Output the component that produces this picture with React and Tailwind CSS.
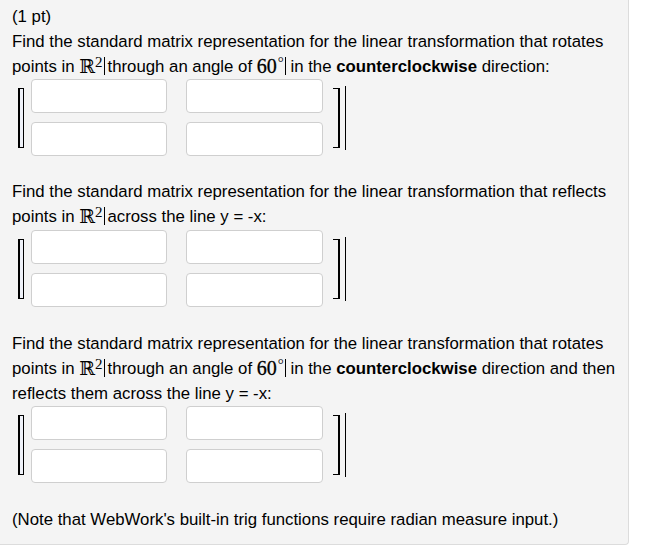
import React from 'react';

const sans = { fontFamily: '"Liberation Sans", Arial, sans-serif' };

function R2() {
  return (
    <span className="inline-flex items-start">
      <span className="font-['DejaVu_Serif',serif] text-[19px] leading-[25px]">ℝ</span>
      <span className="font-['Liberation_Serif',serif] text-[15px] leading-[18px] -mt-[1px]">2</span>
      <span className="inline-block w-px h-[18px] bg-black mt-[3px] ml-[2px] mr-[2px]" />
    </span>
  );
}

function Sixty() {
  return (
    <span className="inline-flex items-start">
      <span className="font-['Liberation_Serif',serif] text-[20px] leading-[25px] [-webkit-text-stroke:0.3px_black]">60</span>
      <span className="font-['Liberation_Serif',serif] text-[15px] leading-[14px] mt-[1px] ml-[1px]">°</span>
      <span className="inline-block w-px h-[18px] bg-black mt-[3px] ml-[1px]" />
    </span>
  );
}

function Matrix({ className = '' }) {
  return (
    <div className={`flex items-center ${className}`}>
      <div className="ml-[6px] w-[6px] h-[60px] border border-black border-l-2 bg-[#eef1f8]" />
      <div className="ml-[7px] grid grid-cols-[136px_137px] gap-x-[19px] gap-y-[9px]">
        {[0, 1, 2, 3].map((i) => (
          <input
            key={i}
            className="h-[34px] bg-white border border-[#cfcfcf] rounded-[4px] outline-none"
          />
        ))}
      </div>
      <div className="ml-[10px] w-[7px] h-[60px] border-t border-r-2 border-b border-black" />
      <div className="ml-[5px] w-px h-[64px] bg-black" />
    </div>
  );
}

export default function App() {
  return (
    <div className="w-[647px] h-[546px] bg-white" style={sans}>
      <div className="w-[629px] h-[545px] bg-[#f4f4f4] border-r border-b border-[#dcdcdc] rounded-br-[4px] pl-[12px] pt-[4px] text-[16.8px] leading-[25px] text-black">
        <div>(1 pt)</div>
        <div>
          Find the standard matrix representation for the linear transformation that rotates
        </div>
        <div className="flex items-start whitespace-pre">
          <span>points in </span>
          <R2 />
          <span>through an angle of </span>
          <Sixty />
          <span> in the </span>
          <b>counterclockwise</b>
          <span> direction:</span>
        </div>
        <Matrix />

        <div className="mt-[23px]">
          Find the standard matrix representation for the linear transformation that reflects
        </div>
        <div className="flex items-start whitespace-pre">
          <span>points in </span>
          <R2 />
          <span>across the line y = -x:</span>
        </div>
        <Matrix className="mt-[1px]" />

        <div className="mt-[24px]">
          Find the standard matrix representation for the linear transformation that rotates
        </div>
        <div className="flex items-start whitespace-pre">
          <span>points in </span>
          <R2 />
          <span>through an angle of </span>
          <Sixty />
          <span> in the </span>
          <b>counterclockwise</b>
          <span> direction and then</span>
        </div>
        <div>reflects them across the line y = -x:</div>
        <Matrix />

        <div className="mt-[24px]">
          (Note that WebWork's built-in trig functions require radian measure input.)
        </div>
      </div>
    </div>
  );
}
